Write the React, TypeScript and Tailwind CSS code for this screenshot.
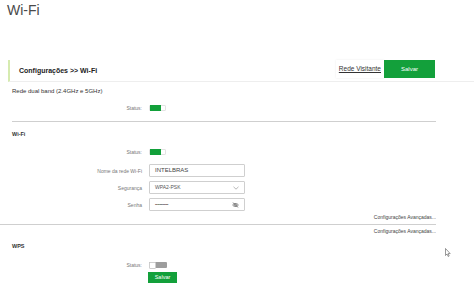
import React from 'react';

const Toggle = ({ on }: { on: boolean }) =>
  on ? (
    <div className="flex h-[6px] w-[17px] items-center rounded-[1px] border border-[#e3e3e3] bg-white">
      <div className="h-[6px] w-[11px] bg-[#12a03a]" />
    </div>
  ) : (
    <div className="flex h-[6px] w-[18px] items-center rounded-[1px] bg-[#9d9d9d]">
      <div className="h-[7px] w-[7px] rounded-[1px] border border-[#cfcfcf] bg-white" />
    </div>
  );

const Row = ({ label, children, className = '' }: { label: string; children: React.ReactNode; className?: string }) => (
  <div className={`flex items-center ${className}`}>
    <div className="w-[143px] pr-[1px] text-right text-[5px] leading-[6px] text-[#777]">{label}</div>
    <div className="ml-[6px] flex items-center">{children}</div>
  </div>
);

export default function App() {
  return (
    <div className="relative h-[293px] w-[474px] overflow-hidden bg-white font-['Liberation_Sans',Arial,sans-serif] text-[#333]">
      <h1 className="pl-[7px] pt-[2px] text-[14px] leading-[16px] text-[#4a4a4a]">Wi-Fi</h1>

      {/* Header */}
      <div className="ml-[8px] mt-[42px] flex h-[22px] border-b border-[#eeeeee] border-l-2 border-l-[#d6ebb0]">
        <div className="flex flex-1 items-center pl-[9px] pt-[1px] text-[7px] font-bold text-[#222]">
          Configurações &gt;&gt; Wi-Fi
        </div>
        <div className="mr-[39px] flex h-[18px] items-stretch">
          <div className="flex items-center px-[3px] text-[6.5px] text-[#333] underline shadow-[0_0_2px_rgba(0,0,0,0.08)]">
            Rede Visitante
          </div>
          <div className="flex w-[51px] items-center justify-center bg-[#13a03b] text-[6px] text-white">Salvar</div>
        </div>
      </div>

      {/* Dual band */}
      <div className="pl-[12px] pt-[5px] text-[6px] leading-[8px] text-[#333]">Rede dual band (2.4GHz e 5GHz)</div>
      <Row label="Status:" className="mt-[10px]">
        <Toggle on />
      </Row>
      <div className="ml-[12px] mt-[10px] w-[424px] border-t border-[#cfcfcf]" />

      {/* Wi-Fi */}
      <div className="pl-[12px] pt-[8px] text-[5.5px] font-bold leading-[8px] text-[#333]">Wi-Fi</div>
      <Row label="Status:" className="mt-[11px]">
        <Toggle on />
      </Row>
      <Row label="Nome da rede Wi-Fi" className="mt-[9px]">
        <div className="flex h-[13px] w-[96px] items-center rounded-[1px] border border-[#cfcfcf] pl-[5px] text-[6px] text-[#444]">
          INTELBRAS
        </div>
      </Row>
      <Row label="Segurança" className="mt-[4px]">
        <div className="flex h-[13px] w-[96px] items-center justify-between rounded-[1px] border border-[#cfcfcf] pl-[5px] pr-[5px] text-[5px] text-[#555]">
          <span>WPA2-PSK</span>
          <svg width="6" height="4" viewBox="0 0 6 4">
            <path d="M0.5 0.8 L3 3.2 L5.5 0.8" fill="none" stroke="#999" strokeWidth="0.7" />
          </svg>
        </div>
      </Row>
      <Row label="Senha" className="mt-[4px]">
        <div className="flex h-[13px] w-[96px] items-center justify-between rounded-[1px] border border-[#cfcfcf] pl-[5px] pr-[5px] text-[5px] text-[#555]">
          <span className="text-[4px] tracking-[-0.3px]">••••••••••••</span>
          <svg width="7" height="6" viewBox="0 0 14 12">
            <path d="M1 6 C3.5 2 10.5 2 13 6 C10.5 10 3.5 10 1 6 Z" fill="none" stroke="#555" strokeWidth="1.3" />
            <circle cx="7" cy="6" r="2" fill="none" stroke="#555" strokeWidth="1.3" />
            <path d="M2 1 L12 11" stroke="#555" strokeWidth="1.3" />
          </svg>
        </div>
      </Row>

      <div className="mr-[38px] mt-[3px] text-right text-[5px] leading-[6px] text-[#444]">Configurações Avançadas...</div>
      <div className="mt-[4px] w-[436px] border-t border-[#cfcfcf]" />
      <div className="mr-[38px] mt-[3px] text-right text-[5px] leading-[6px] text-[#444]">Configurações Avançadas...</div>

      {/* WPS */}
      <div className="pl-[12px] pt-[8px] text-[5.5px] font-bold leading-[8px] text-[#333]">WPS</div>
      <Row label="Status:" className="mt-[12px]">
        <Toggle on={false} />
      </Row>
      <div className="ml-[148px] mt-[4px] flex h-[11px] w-[29px] items-center justify-center bg-[#13a03b] text-[5.5px] text-white">
        Salvar
      </div>

      {/* mouse cursor */}
      <svg className="absolute left-[445px] top-[248px]" width="6" height="9" viewBox="0 0 6 9">
        <path d="M0.5 0.5 L0.5 7.5 L2 6 L3.2 8.5 L4.2 8 L3 5.6 L5.2 5.6 Z" fill="#fff" stroke="#555" strokeWidth="0.6" />
      </svg>
    </div>
  );
}
